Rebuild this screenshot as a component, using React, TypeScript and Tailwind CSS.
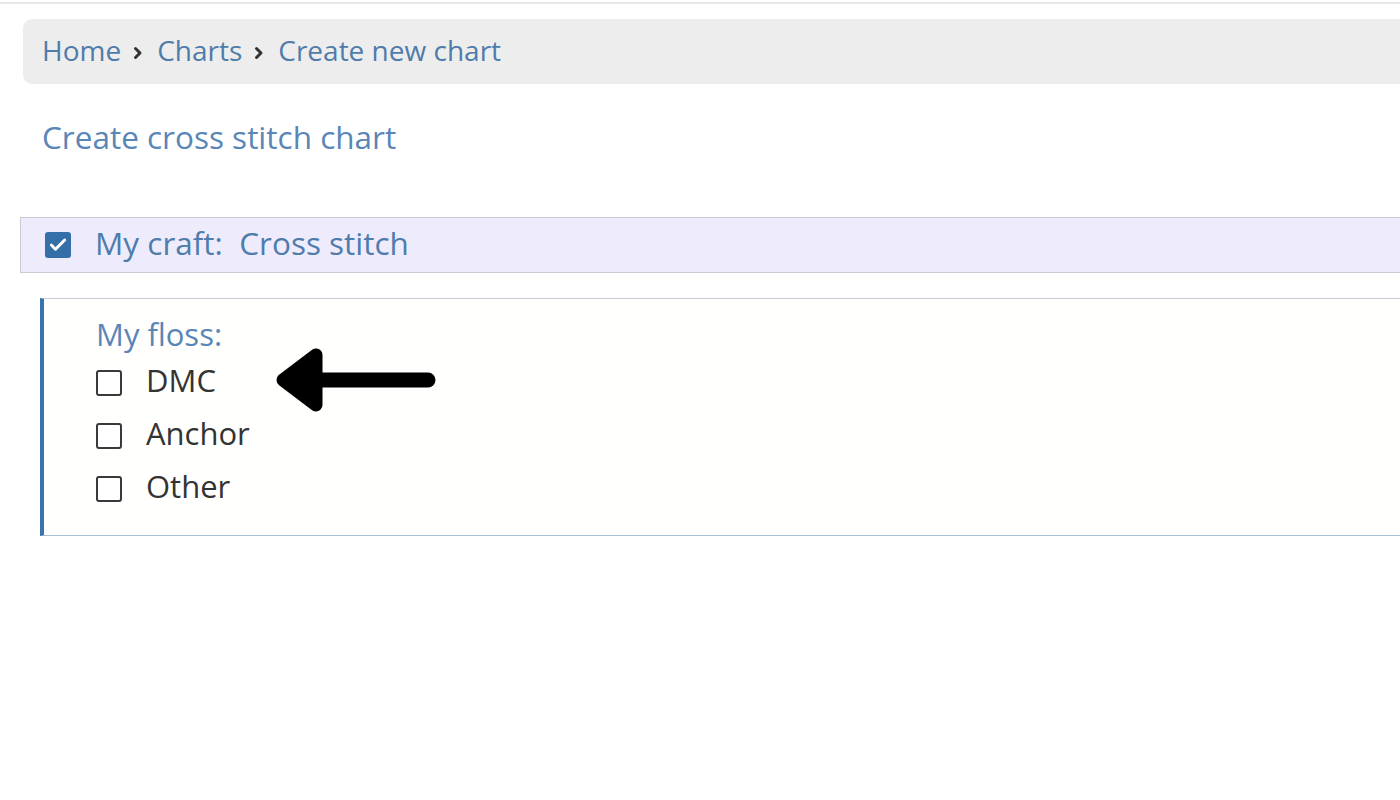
import { Check } from 'lucide-react'

const font = { fontFamily: '"Open Sans", "Noto Sans", sans-serif' }

function Chevron() {
  return (
    <svg width="10" height="16" viewBox="0 0 10 16" className="ml-[12px] mr-[14px] mt-[6px]">
      <path d="M2.5 3.5 L7 8 L2.5 12.5" fill="none" stroke="#333" strokeWidth="3" strokeLinecap="round" strokeLinejoin="round" />
    </svg>
  )
}

function FlossOption({ label }: { label: string }) {
  return (
    <label className="flex h-[53px] items-center">
      <span className="h-[26px] w-[26px] rounded-[3px] border-2 border-[#3a3a3a] bg-white" />
      <span className="ml-[24px] pb-[5px] text-[31px] text-[#333]">{label}</span>
    </label>
  )
}

export default function App() {
  return (
    <div className="relative h-[800px] w-[1400px] overflow-hidden bg-white" style={font}>
      <div className="mt-[2px] h-[2px] w-full bg-[#e8e8e8]" />

      <nav className="ml-[23px] mt-[15px] flex h-[65px] w-[1420px] items-center rounded-l-[9px] bg-[#ededed] pb-[3px] pl-[19px] text-[28px] text-[#4f7cab]">
        <span>Home</span>
        <Chevron />
        <span>Charts</span>
        <Chevron />
        <span>Create new chart</span>
      </nav>

      <h1 className="ml-[42px] mt-[31px] text-[31.5px] font-normal leading-[44px] text-[#5a86b7]">
        Create cross stitch chart
      </h1>

      <div className="ml-[20px] mt-[58px] flex h-[56px] w-[1420px] items-center border border-[#cbcbd3] bg-[#eeecfc] pl-[24px]">
        <span className="flex h-[26px] w-[26px] items-center justify-center rounded-[3px] bg-[#3470a7]">
          <Check size={20} strokeWidth={3.5} className="text-white" />
        </span>
        <span className="ml-[24px] whitespace-pre pb-[5px] text-[31.5px] text-[#4f7cab]">My craft:  Cross stitch</span>
      </div>

      <section className="ml-[40px] mt-[25px] h-[238px] w-[1420px] border-b border-l-4 border-t border-b-[#a9bfd6] border-l-[#3a74ad] border-t-[#c3cbd4] bg-[#fffffd] pl-[52px] pt-[15px]">
        <div className="text-[31px] leading-[40px] text-[#5a86b7]">My floss:</div>
        <div className="mt-[2px] flex flex-col">
          <FlossOption label="DMC" />
          <FlossOption label="Anchor" />
          <FlossOption label="Other" />
        </div>
      </section>

      <svg className="absolute left-[268px] top-[340px]" width="176" height="80" viewBox="268 340 176 80">
        <line x1="318" y1="380" x2="428" y2="380" stroke="#000" strokeWidth="15" strokeLinecap="round" />
        <polygon points="283,380 316,355 316,405" fill="#000" stroke="#000" strokeWidth="13" strokeLinejoin="round" />
      </svg>
    </div>
  )
}
